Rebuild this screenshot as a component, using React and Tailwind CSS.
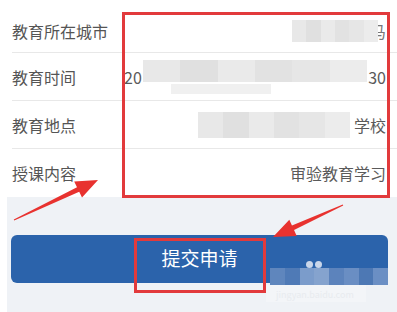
const FONT = { fontFamily: '"Noto Sans CJK SC", "Noto Sans", sans-serif' }

function Blur({ className }) {
  return (
    <div className={`flex h-[22px] ${className}`}>
      <div className="flex-1 bg-[#e8e8e8]" />
      <div className="flex-1 bg-[#e0e0e0]" />
      <div className="flex-1 bg-[#eaeaea]" />
      <div className="flex-1 bg-[#e2e2e2]" />
      <div className="flex-1 bg-[#e6e6e6]" />
      <div className="flex-1 bg-[#ececec]" />
    </div>
  )
}

function Row({ label, children, h = 'h-[48px]', last }) {
  return (
    <div className={`flex items-center justify-between pr-[11px] ${h} ${last ? '' : 'border-b border-[#e8e8e8]'}`}>
      <span className="text-[16px] text-[#555] leading-none">{label}</span>
      <div className="flex items-center text-[16px] text-[#5a5a5a] leading-none">{children}</div>
    </div>
  )
}

export default function App() {
  return (
    <div className="relative w-[397px] h-[312px] overflow-hidden bg-white" style={FONT}>
      {/* form rows */}
      <div className="pl-3 pt-[10px] h-[197px]">
        <Row label="教育所在城市" h="h-[43px]">
          <Blur className="relative z-10 w-[86px] rounded-sm -mr-[8px]" />
          <span className="text-[#777]">马</span>
        </Row>
        <Row label="教育时间">
          <div className="flex items-center w-[262px]">
            <span>20</span>
            <div className="flex-1 flex flex-col gap-[2px] mx-[1px]">
              <Blur className="w-full h-[12px]" />
              <div className="ml-[28px] w-[100px] h-[10px] bg-[#f0f0f0]" />
            </div>
            <span>30</span>
          </div>
        </Row>
        <Row label="教育地点">
          <Blur className="w-[152px] h-[26px] mr-[4px]" />
          <span>学校</span>
        </Row>
        <Row label="授课内容" h="h-[47px]" last>
          <span>审验教育学习</span>
        </Row>
      </div>

      {/* bottom area */}
      <div className="pl-[7px] h-[115px] bg-white">
        <div className="h-full bg-[#eff2f6] pt-[38px] pl-[4px] pr-[9px]">
          <button className="w-full h-[48px] rounded-[6px] bg-[#2b63ab] text-white text-[19px] flex items-center justify-center">
            <span className="-mt-[2px]">提交申请</span>
          </button>
        </div>
      </div>

      {/* annotations */}
      <div className="absolute left-[122px] top-[12px] w-[268px] h-[186px] border-[3px] border-[#e23a3c]" />
      <div className="absolute left-[134px] top-[238px] w-[132px] h-[55px] border-[3px] border-[#e23a3c]" />

      {/* watermark mosaic */}
      <div className="absolute left-[306px] top-[261px] flex gap-[2px]">
        <div className="w-[7px] h-[7px] rounded-full bg-[#c9d6ea]" />
        <div className="w-[7px] h-[7px] rounded-full bg-[#c9d6ea]" />
      </div>
      <div className="absolute left-[270px] top-[268px] w-[118px] h-[17px] flex">
        <div className="flex-1 bg-[#5f86bd]" />
        <div className="flex-1 bg-[#4f7ab6]" />
        <div className="flex-1 bg-[#7b9ccb]" />
        <div className="flex-1 bg-[#85a3ce]" />
        <div className="flex-1 bg-[#5c83bc]" />
        <div className="flex-1 bg-[#6a8ec3]" />
        <div className="flex-1 bg-[#4d78b4]" />
        <div className="flex-1 bg-[#6b8fc4]" />
      </div>
      <div className="absolute left-[266px] top-[285px] w-[100px] h-[17px] bg-[#f3f5f8]" />
      <div className="absolute left-[276px] top-[288px] text-[9px] text-[#e8ebef]">jingyan.baidu.com</div>

      <svg className="absolute inset-0 pointer-events-none" width="397" height="312">
        <polygon
          fill="#e8322f"
          points="13.8,219.55 77,187.2 74.2,181.4 98,180 82,197.6 79.2,191.8 14.2,220.45"
        />
        <polygon
          fill="#e8322f"
          points="342.8,204.55 291.96,225.58 289.3,219.7 273,237 296.7,236 294.04,230.12 343.2,205.45"
        />
      </svg>
    </div>
  )
}
